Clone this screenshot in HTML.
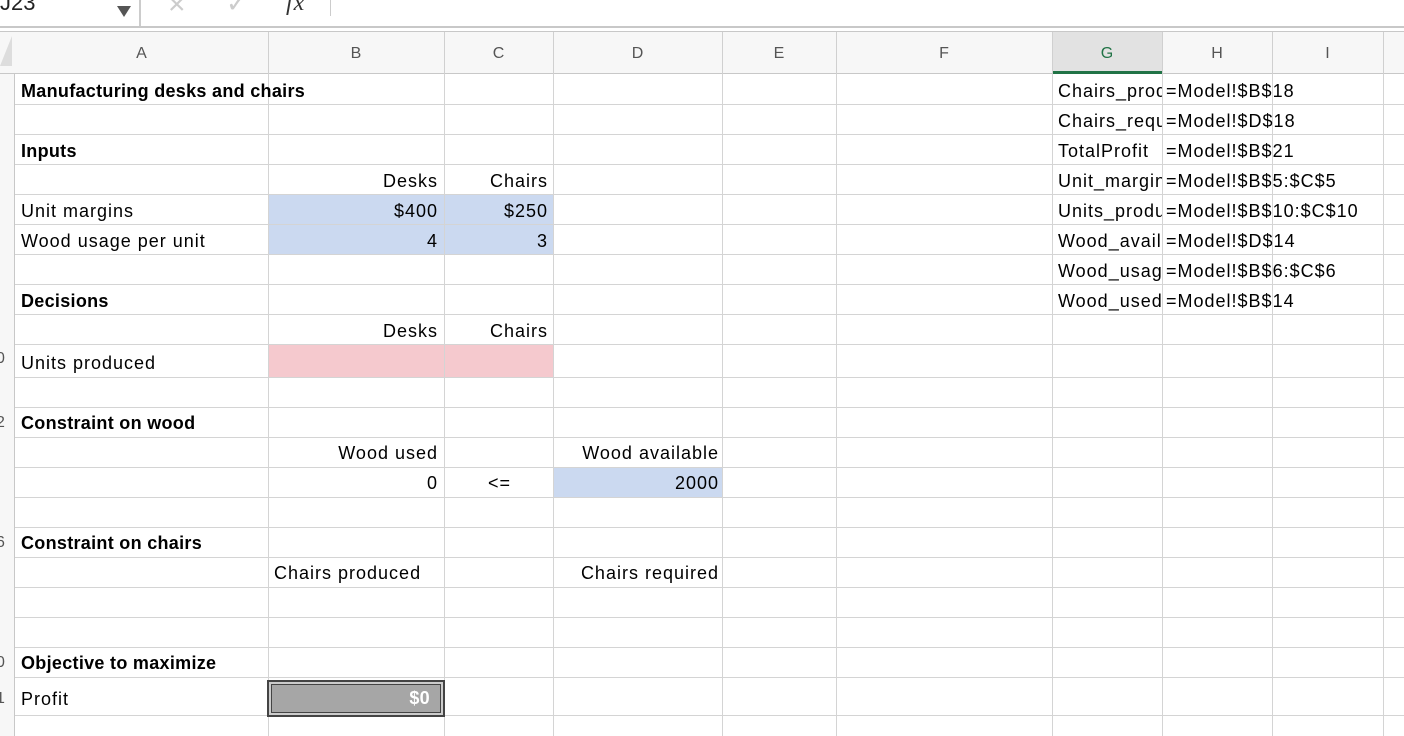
<!DOCTYPE html>
<html><head><meta charset="utf-8"><style>
body{margin:0;width:1404px;height:736px;overflow:hidden;background:#fff;font-family:"Liberation Sans",sans-serif;font-size:18px;letter-spacing:1px;color:#000;position:relative}
div{position:absolute;box-sizing:border-box}
.v{width:1px;background:#d4d4d4;top:74px;height:662px}
.h{height:1px;background:#d4d4d4;left:15px;width:1389px}
.t{height:30px;line-height:32px;white-space:nowrap;overflow:hidden}
.b{font-weight:bold;letter-spacing:0.3px}
.r{text-align:right}
.ch{top:32px;height:42px;line-height:44px;text-align:center;color:#555;font-size:16px;letter-spacing:0}
</style></head><body>
<div style="left:0;top:0;width:1404px;height:27px;background:#fff"></div>
<div style="left:0;top:-10px;font-size:22px;color:#222;letter-spacing:0">J23</div>
<div style="left:117px;top:6px;width:0;height:0;border-left:7px solid transparent;border-right:7px solid transparent;border-top:11px solid #555"></div>
<div style="left:139px;top:0;width:2px;height:26px;background:#ccc"></div>
<div style="left:168px;top:-12px;font-size:30px;color:#ccc">×</div>
<div style="left:226px;top:-12px;font-size:26px;color:#ccc">✓</div>
<div style="left:286px;top:-10px;font-size:24px;font-style:italic;font-family:'Liberation Serif',serif;color:#333">fx</div>
<div style="left:330px;top:0;width:1px;height:16px;background:#ccc"></div>
<div style="left:0;top:26px;width:1404px;height:2px;background:#c8c8c8"></div>
<div style="left:0;top:31px;width:1404px;height:43px;background:#f7f7f7;border-top:1px solid #c8c8c8;border-bottom:1px solid #c8c8c8"></div>
<div style="left:0;top:36px;width:0;height:0;border-bottom:30px solid #ddd;border-left:12px solid transparent"></div>
<div style="left:0;top:74px;width:15px;height:662px;background:#f7f7f7;border-right:1px solid #c8c8c8"></div>
<div class="ch" style="left:15px;width:253px">A</div>
<div class="ch" style="left:268px;width:176px">B</div>
<div class="ch" style="left:444px;width:109px">C</div>
<div class="ch" style="left:553px;width:169px">D</div>
<div class="ch" style="left:722px;width:114px">E</div>
<div class="ch" style="left:836px;width:216px">F</div>
<div class="ch" style="left:1052px;width:110px;color:#217346;background:#e2e2e2;border-bottom:3px solid #217346">G</div>
<div class="ch" style="left:1162px;width:110px">H</div>
<div class="ch" style="left:1272px;width:111px">I</div>
<div style="top:32px;height:42px;width:1px;background:#d0d0d0;left:268px"></div>
<div style="top:32px;height:42px;width:1px;background:#d0d0d0;left:444px"></div>
<div style="top:32px;height:42px;width:1px;background:#d0d0d0;left:553px"></div>
<div style="top:32px;height:42px;width:1px;background:#d0d0d0;left:722px"></div>
<div style="top:32px;height:42px;width:1px;background:#d0d0d0;left:836px"></div>
<div style="top:32px;height:42px;width:1px;background:#d0d0d0;left:1052px"></div>
<div style="top:32px;height:42px;width:1px;background:#d0d0d0;left:1162px"></div>
<div style="top:32px;height:42px;width:1px;background:#d0d0d0;left:1272px"></div>
<div style="top:32px;height:42px;width:1px;background:#d0d0d0;left:1383px"></div>
<div style="left:268px;top:194px;width:285px;height:61px;background:#cbd9f0"></div>
<div style="left:268px;top:344px;width:285px;height:34px;background:#f5c9ce"></div>
<div style="left:553px;top:468px;width:169px;height:30px;background:#cbd9f0"></div>
<div class="v" style="left:268px"></div><div class="v" style="left:444px"></div><div class="v" style="left:553px"></div><div class="v" style="left:722px"></div><div class="v" style="left:836px"></div><div class="v" style="left:1052px"></div><div class="v" style="left:1162px"></div><div class="v" style="left:1272px"></div><div class="v" style="left:1383px"></div>
<div class="h" style="top:104px"></div><div class="h" style="top:134px"></div><div class="h" style="top:164px"></div><div class="h" style="top:194px"></div><div class="h" style="top:224px"></div><div class="h" style="top:254px"></div><div class="h" style="top:284px"></div><div class="h" style="top:314px"></div><div class="h" style="top:344px"></div><div class="h" style="top:377px"></div><div class="h" style="top:407px"></div><div class="h" style="top:437px"></div><div class="h" style="top:467px"></div><div class="h" style="top:497px"></div><div class="h" style="top:527px"></div><div class="h" style="top:557px"></div><div class="h" style="top:587px"></div><div class="h" style="top:617px"></div><div class="h" style="top:647px"></div><div class="h" style="top:677px"></div><div class="h" style="top:715px"></div>
<div style="left:267px;top:680px;width:178px;height:37px;border:2px solid #444;background:#a6a6a6;box-shadow:inset 0 0 0 2px #ccc,inset 0 0 0 3px #444"></div>
<div class="b" style="left:268px;top:683px;width:162px;height:30px;line-height:30px;text-align:right;color:#fff">$0</div>
<div style="left:-4px;top:350px;font-size:16px;color:#555">0</div>
<div style="left:-4px;top:414px;font-size:16px;color:#555">2</div>
<div style="left:-4px;top:534px;font-size:16px;color:#555">6</div>
<div style="left:-4px;top:654px;font-size:16px;color:#555">0</div>
<div style="left:-4px;top:690px;font-size:16px;color:#555">1</div>
<div class="t b" style="left:21px;top:75px">Manufacturing desks and chairs</div>
<div class="t b" style="left:21px;top:135px">Inputs</div>
<div class="t r" style="left:268px;width:170px;top:165px">Desks</div>
<div class="t r" style="left:444px;width:104px;top:165px">Chairs</div>
<div class="t" style="left:21px;top:195px">Unit margins</div>
<div class="t r" style="left:268px;width:170px;top:195px">$400</div>
<div class="t r" style="left:444px;width:104px;top:195px">$250</div>
<div class="t" style="left:21px;top:225px">Wood usage per unit</div>
<div class="t r" style="left:268px;width:170px;top:225px">4</div>
<div class="t r" style="left:444px;width:104px;top:225px">3</div>
<div class="t b" style="left:21px;top:285px">Decisions</div>
<div class="t r" style="left:268px;width:170px;top:315px">Desks</div>
<div class="t r" style="left:444px;width:104px;top:315px">Chairs</div>
<div class="t" style="left:21px;top:347px">Units produced</div>
<div class="t b" style="left:21px;top:407px">Constraint on wood</div>
<div class="t r" style="left:268px;width:170px;top:437px">Wood used</div>
<div class="t r" style="left:553px;width:166px;top:437px">Wood available</div>
<div class="t r" style="left:268px;width:170px;top:467px">0</div>
<div class="t" style="left:488px;top:467px">&lt;=</div>
<div class="t r" style="left:553px;width:166px;top:467px">2000</div>
<div class="t b" style="left:21px;top:527px">Constraint on chairs</div>
<div class="t" style="left:274px;top:557px">Chairs produced</div>
<div class="t r" style="left:553px;width:166px;top:557px">Chairs required</div>
<div class="t b" style="left:21px;top:647px">Objective to maximize</div>
<div class="t" style="left:21px;top:683px">Profit</div>
<div class="t" style="left:1058px;top:75px;width:104px">Chairs_production</div>
<div class="t" style="left:1058px;top:105px;width:104px">Chairs_required</div>
<div class="t" style="left:1058px;top:135px;width:104px">TotalProfit</div>
<div class="t" style="left:1058px;top:165px;width:104px">Unit_margins</div>
<div class="t" style="left:1058px;top:195px;width:104px">Units_produced</div>
<div class="t" style="left:1058px;top:225px;width:104px">Wood_available</div>
<div class="t" style="left:1058px;top:255px;width:104px">Wood_usage</div>
<div class="t" style="left:1058px;top:285px;width:104px">Wood_used</div>
<div class="t" style="left:1166px;top:75px">=Model!$B$18</div>
<div class="t" style="left:1166px;top:105px">=Model!$D$18</div>
<div class="t" style="left:1166px;top:135px">=Model!$B$21</div>
<div class="t" style="left:1166px;top:165px">=Model!$B$5:$C$5</div>
<div class="t" style="left:1166px;top:195px">=Model!$B$10:$C$10</div>
<div class="t" style="left:1166px;top:225px">=Model!$D$14</div>
<div class="t" style="left:1166px;top:255px">=Model!$B$6:$C$6</div>
<div class="t" style="left:1166px;top:285px">=Model!$B$14</div>
</body></html>
